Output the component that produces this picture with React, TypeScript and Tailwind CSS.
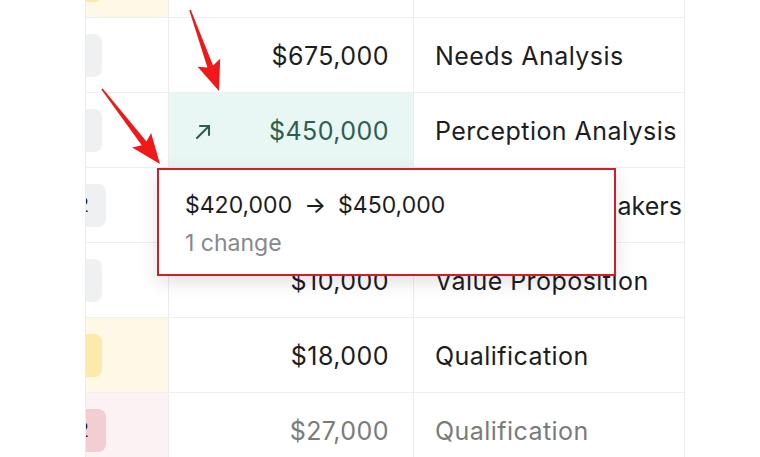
import React from "react";

type Row = {
  badge: "gray" | "yellow" | "pink";
  badgeText?: string;
  tint?: string;
  amount: string;
  stage: string;
  changed?: boolean;
  muted?: boolean;
  tight?: boolean;
};

const rows: Row[] = [
  { badge: "yellow", tint: "bg-[#fef8e6]", amount: "$32,000", stage: "Prospecting" },
  { badge: "gray", amount: "$675,000", stage: "Needs Analysis" },
  { badge: "gray", amount: "$450,000", stage: "Perception Analysis", changed: true },
  { badge: "gray", badgeText: "2", amount: "$120,000", stage: "Key Decision Makers", tight: true },
  { badge: "gray", amount: "$10,000", stage: "Value Proposition" },
  { badge: "yellow", tint: "bg-[#fef8e6]", amount: "$18,000", stage: "Qualification" },
  { badge: "pink", badgeText: "2", tint: "bg-[#fcf1f3]", amount: "$27,000", stage: "Qualification", muted: true },
];

const badgeColors = {
  gray: "bg-[#eef0f2]",
  yellow: "bg-[#fde9a9]",
  pink: "bg-[#f4cdd3]",
};

// red annotation arrow, skitch style
function Pointer({ x1, y1, x2, y2 }: { x1: number; y1: number; x2: number; y2: number }) {
  const len = Math.hypot(x2 - x1, y2 - y1);
  const dx = (x2 - x1) / len;
  const dy = (y2 - y1) / len;
  const nx = -dy;
  const ny = dx;
  const headLen = 26;
  const headW = 12;
  const bx = x2 - dx * headLen;
  const by = y2 - dy * headLen;
  const pts = [
    [x1 + nx * 0.8, y1 + ny * 0.8],
    [bx + nx * 3, by + ny * 3],
    [bx + nx * headW - dx * 4, by + ny * headW - dy * 4],
    [x2, y2],
    [bx - nx * headW - dx * 4, by - ny * headW - dy * 4],
    [bx - nx * 3, by - ny * 3],
    [x1 - nx * 0.8, y1 - ny * 0.8],
  ];
  return <polygon points={pts.map((p) => p.join(",")).join(" ")} fill="#f01818" />;
}

export default function App() {
  return (
    <div className="relative h-[457px] w-[760px] overflow-hidden bg-white font-['Inter',sans-serif] text-[#1d1d1f]">
      <div className="-mt-[57px] ml-[85px] w-[600px] border-x border-[#ececec]">
        {rows.map((r, i) => (
          <div key={i} className="flex h-[75px] border-b border-[#efefef]">
            <div className={`flex w-[83px] items-center overflow-hidden border-r border-[#ececec] ${r.tint ?? ""}`}>
              <div
                className={`flex h-[43px] shrink-0 items-center justify-end rounded-lg pr-[17px] text-[20px] ${
                  r.badgeText ? "-ml-[30px] w-[50px]" : "-ml-[30px] w-[46px]"
                } ${badgeColors[r.badge]}`}
              >
                {r.badgeText}
              </div>
            </div>
            <div
              className={`flex w-[245px] items-center justify-between border-r border-[#ececec] pl-[26px] pr-[24px] pt-[3px] text-[25px] tracking-[0.45px] ${
                r.changed ? "bg-[#e9f7f4] text-[#2e5e51]" : ""
              } ${r.muted ? "text-[#7a7b7d]" : ""}`}
            >
              <span className="flex">
                {r.changed && (
                  <svg width="16" height="16" viewBox="0 0 16 16" fill="none" stroke="#2e5e51" strokeWidth="2.1" strokeLinecap="round" strokeLinejoin="round">
                    <path d="M2 14 14 2" />
                    <path d="M5 2h9v9" />
                  </svg>
                )}
              </span>
              <span>{r.amount}</span>
            </div>
            <div
              className={`flex flex-1 items-center whitespace-nowrap pl-[21px] pt-[3px] text-[25px] ${
                r.tight ? "tracking-normal" : "tracking-[0.45px]"
              } ${r.muted ? "text-[#7a7b7d]" : ""}`}
            >
              {r.stage}
            </div>
          </div>
        ))}
      </div>

      {/* tooltip */}
      <div className="absolute left-[157px] top-[168px] h-[108px] w-[459px] border-2 border-[#cf202a] bg-white pl-[26px] pt-[19px] shadow-[0_6px_18px_rgba(0,0,0,0.12)]">
        <div className="flex items-center gap-[12px] text-[23px] leading-[32px] text-[#1d1d1f]">
          <span>$420,000</span>
          <span className="font-medium">→</span>
          <span>$450,000</span>
        </div>
        <div className="mt-[7px] text-[23px] leading-[30px] text-[#86898d]">1 change</div>
      </div>

      <svg className="pointer-events-none absolute inset-0" width="760" height="457">
        <Pointer x1={190} y1={10} x2={219} y2={91} />
        <Pointer x1={102} y1={89} x2={160} y2={164} />
      </svg>
    </div>
  );
}
